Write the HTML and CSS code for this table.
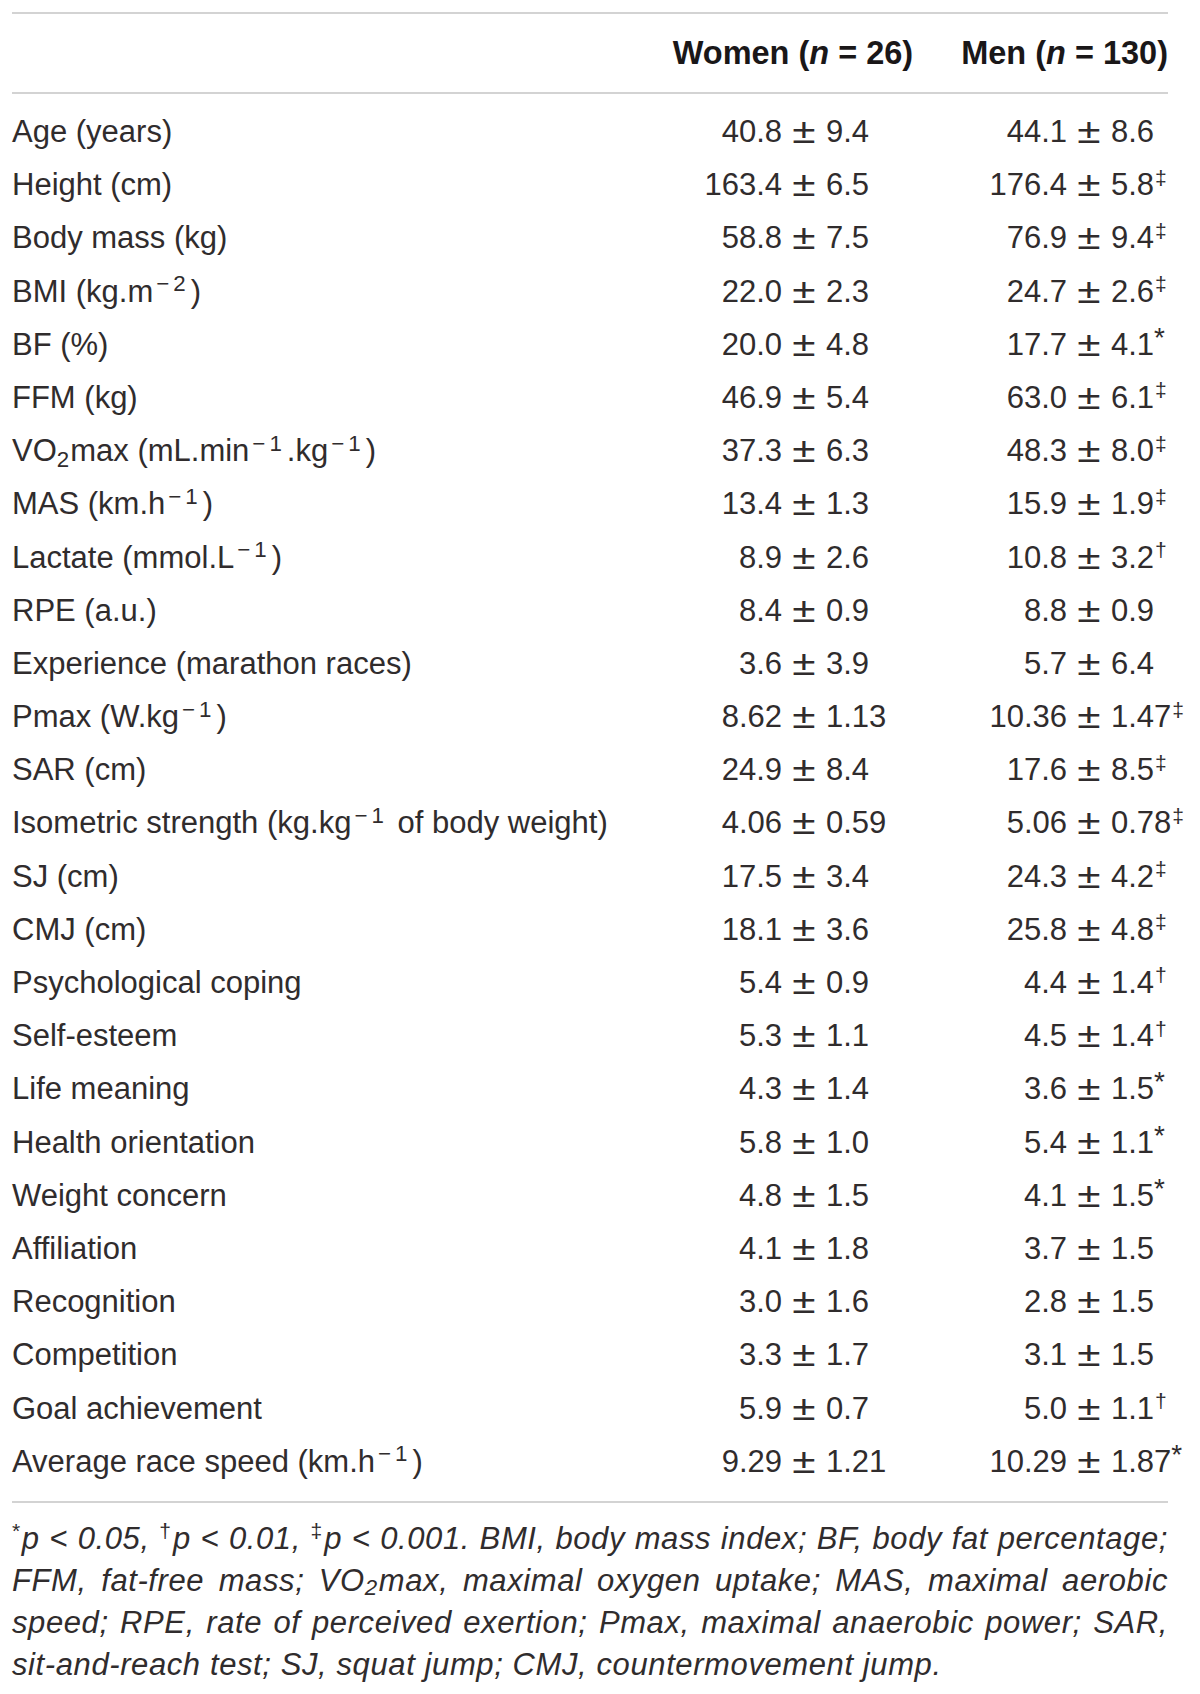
FILE: index.html
```html
<!DOCTYPE html>
<html lang="en">
<head>
<meta charset="utf-8">
<title>Table</title>
<link rel="stylesheet" href="styles.css">
</head>
<body>
<div class="tbl">
  <div class="rule"></div>
  <div class="head">
    <div class="h">Women (<i>n</i> = 26)</div>
    <div class="h">Men (<i>n</i> = 130)</div>
  </div>
  <div class="rule"></div>
  <div class="rows">
    <div class="row"><div class="lab">Age (years)</div><span class="a">40.8</span><span class="pm">±</span><span class="b">9.4</span><span class="a">44.1</span><span class="pm">±</span><span class="b">8.6</span></div>
    <div class="row"><div class="lab">Height (cm)</div><span class="a">163.4</span><span class="pm">±</span><span class="b">6.5</span><span class="a">176.4</span><span class="pm">±</span><span class="b">5.8<sup>‡</sup></span></div>
    <div class="row"><div class="lab">Body mass (kg)</div><span class="a">58.8</span><span class="pm">±</span><span class="b">7.5</span><span class="a">76.9</span><span class="pm">±</span><span class="b">9.4<sup>‡</sup></span></div>
    <div class="row"><div class="lab">BMI (kg.m<sup class="ex">−2</sup>)</div><span class="a">22.0</span><span class="pm">±</span><span class="b">2.3</span><span class="a">24.7</span><span class="pm">±</span><span class="b">2.6<sup>‡</sup></span></div>
    <div class="row"><div class="lab">BF (%)</div><span class="a">20.0</span><span class="pm">±</span><span class="b">4.8</span><span class="a">17.7</span><span class="pm">±</span><span class="b">4.1<sup class="st">*</sup></span></div>
    <div class="row"><div class="lab">FFM (kg)</div><span class="a">46.9</span><span class="pm">±</span><span class="b">5.4</span><span class="a">63.0</span><span class="pm">±</span><span class="b">6.1<sup>‡</sup></span></div>
    <div class="row"><div class="lab">VO<sub>2</sub>max (mL.min<sup class="ex">−1</sup>.kg<sup class="ex">−1</sup>)</div><span class="a">37.3</span><span class="pm">±</span><span class="b">6.3</span><span class="a">48.3</span><span class="pm">±</span><span class="b">8.0<sup>‡</sup></span></div>
    <div class="row"><div class="lab">MAS (km.h<sup class="ex">−1</sup>)</div><span class="a">13.4</span><span class="pm">±</span><span class="b">1.3</span><span class="a">15.9</span><span class="pm">±</span><span class="b">1.9<sup>‡</sup></span></div>
    <div class="row"><div class="lab">Lactate (mmol.L<sup class="ex">−1</sup>)</div><span class="a">8.9</span><span class="pm">±</span><span class="b">2.6</span><span class="a">10.8</span><span class="pm">±</span><span class="b">3.2<sup>†</sup></span></div>
    <div class="row"><div class="lab">RPE (a.u.)</div><span class="a">8.4</span><span class="pm">±</span><span class="b">0.9</span><span class="a">8.8</span><span class="pm">±</span><span class="b">0.9</span></div>
    <div class="row"><div class="lab">Experience (marathon races)</div><span class="a">3.6</span><span class="pm">±</span><span class="b">3.9</span><span class="a">5.7</span><span class="pm">±</span><span class="b">6.4</span></div>
    <div class="row"><div class="lab">Pmax (W.kg<sup class="ex">−1</sup>)</div><span class="a">8.62</span><span class="pm">±</span><span class="b">1.13</span><span class="a">10.36</span><span class="pm">±</span><span class="b">1.47<sup>‡</sup></span></div>
    <div class="row"><div class="lab">SAR (cm)</div><span class="a">24.9</span><span class="pm">±</span><span class="b">8.4</span><span class="a">17.6</span><span class="pm">±</span><span class="b">8.5<sup>‡</sup></span></div>
    <div class="row"><div class="lab">Isometric strength (kg.kg<sup class="ex">−1</sup> of body weight)</div><span class="a">4.06</span><span class="pm">±</span><span class="b">0.59</span><span class="a">5.06</span><span class="pm">±</span><span class="b">0.78<sup>‡</sup></span></div>
    <div class="row"><div class="lab">SJ (cm)</div><span class="a">17.5</span><span class="pm">±</span><span class="b">3.4</span><span class="a">24.3</span><span class="pm">±</span><span class="b">4.2<sup>‡</sup></span></div>
    <div class="row"><div class="lab">CMJ (cm)</div><span class="a">18.1</span><span class="pm">±</span><span class="b">3.6</span><span class="a">25.8</span><span class="pm">±</span><span class="b">4.8<sup>‡</sup></span></div>
    <div class="row"><div class="lab">Psychological coping</div><span class="a">5.4</span><span class="pm">±</span><span class="b">0.9</span><span class="a">4.4</span><span class="pm">±</span><span class="b">1.4<sup>†</sup></span></div>
    <div class="row"><div class="lab">Self-esteem</div><span class="a">5.3</span><span class="pm">±</span><span class="b">1.1</span><span class="a">4.5</span><span class="pm">±</span><span class="b">1.4<sup>†</sup></span></div>
    <div class="row"><div class="lab">Life meaning</div><span class="a">4.3</span><span class="pm">±</span><span class="b">1.4</span><span class="a">3.6</span><span class="pm">±</span><span class="b">1.5<sup class="st">*</sup></span></div>
    <div class="row"><div class="lab">Health orientation</div><span class="a">5.8</span><span class="pm">±</span><span class="b">1.0</span><span class="a">5.4</span><span class="pm">±</span><span class="b">1.1<sup class="st">*</sup></span></div>
    <div class="row"><div class="lab">Weight concern</div><span class="a">4.8</span><span class="pm">±</span><span class="b">1.5</span><span class="a">4.1</span><span class="pm">±</span><span class="b">1.5<sup class="st">*</sup></span></div>
    <div class="row"><div class="lab">Affiliation</div><span class="a">4.1</span><span class="pm">±</span><span class="b">1.8</span><span class="a">3.7</span><span class="pm">±</span><span class="b">1.5</span></div>
    <div class="row"><div class="lab">Recognition</div><span class="a">3.0</span><span class="pm">±</span><span class="b">1.6</span><span class="a">2.8</span><span class="pm">±</span><span class="b">1.5</span></div>
    <div class="row"><div class="lab">Competition</div><span class="a">3.3</span><span class="pm">±</span><span class="b">1.7</span><span class="a">3.1</span><span class="pm">±</span><span class="b">1.5</span></div>
    <div class="row"><div class="lab">Goal achievement</div><span class="a">5.9</span><span class="pm">±</span><span class="b">0.7</span><span class="a">5.0</span><span class="pm">±</span><span class="b">1.1<sup>†</sup></span></div>
    <div class="row"><div class="lab">Average race speed (km.h<sup class="ex">−1</sup>)</div><span class="a">9.29</span><span class="pm">±</span><span class="b">1.21</span><span class="a">10.29</span><span class="pm">±</span><span class="b">1.87<sup class="st">*</sup></span></div>
  </div>
  <div class="rule"></div>
  <p class="foot"><sup>*</sup>p &lt; 0.05, <sup>†</sup>p &lt; 0.01, <sup>‡</sup>p &lt; 0.001. BMI, body mass index; BF, body fat percentage; FFM, fat-free mass; VO<sub>2</sub>max, maximal oxygen uptake; MAS, maximal aerobic speed; RPE, rate of perceived exertion; Pmax, maximal anaerobic power; SAR, sit-and-reach test; SJ, squat jump; CMJ, countermovement jump.</p>
</div>
</body>
</html>
```

FILE: styles.css
```css
html, body {
  margin: 0;
  padding: 0;
  background: #ffffff;
}

body {
  font-family: "Liberation Sans", Arial, Helvetica, sans-serif;
  color: #302c2d;
}

.tbl {
  width: 1156px;
  margin: 0 0 0 12px;
  padding-top: 12px;
}

.rule {
  height: 2px;
  background: #d3d3d3;
}

.head {
  height: 78px;
  display: flex;
  justify-content: flex-end;
  align-items: center;
  gap: 48px;
  font-weight: bold;
  font-size: 32.5px;
  line-height: 78px;
  color: #1a1718;
}

.head .h {
  white-space: nowrap;
}

.rows {
  padding: 11px 0 13px 0;
}

.row {
  display: grid;
  grid-template-columns: 668px 102px 44px 114px 127px 44px 57px;
  height: 53.2px;
  line-height: 53.2px;
  font-size: 31px;
  white-space: nowrap;
}

.a {
  text-align: right;
}

.pm {
  text-align: center;
  font-size: 1.12em;
  transform: scaleX(1.22);
}

.b {
  text-align: left;
}

sup {
  font-size: 0.68em;
  line-height: 0;
  vertical-align: 0.5em;
  margin-left: 1px;
}

sup.st {
  font-size: 0.9em;
  vertical-align: 0.28em;
  margin-left: 0;
}

sup.ex {
  font-size: 0.72em;
  vertical-align: 0.46em;
  letter-spacing: 4px;
  margin-left: 3px;
  margin-right: 1px;
}

sub {
  font-size: 0.72em;
  line-height: 0;
  vertical-align: -0.28em;
  margin-right: 1px;
}

.foot {
  margin: 0;
  padding-top: 15px;
  font-style: italic;
  font-size: 31px;
  line-height: 42px;
  text-align: justify;
  letter-spacing: 0.6px;
}

.foot sup {
  font-style: normal;
  margin-left: 0;
  margin-right: 1px;
}

.foot sub {
  vertical-align: -0.2em;
}
```
